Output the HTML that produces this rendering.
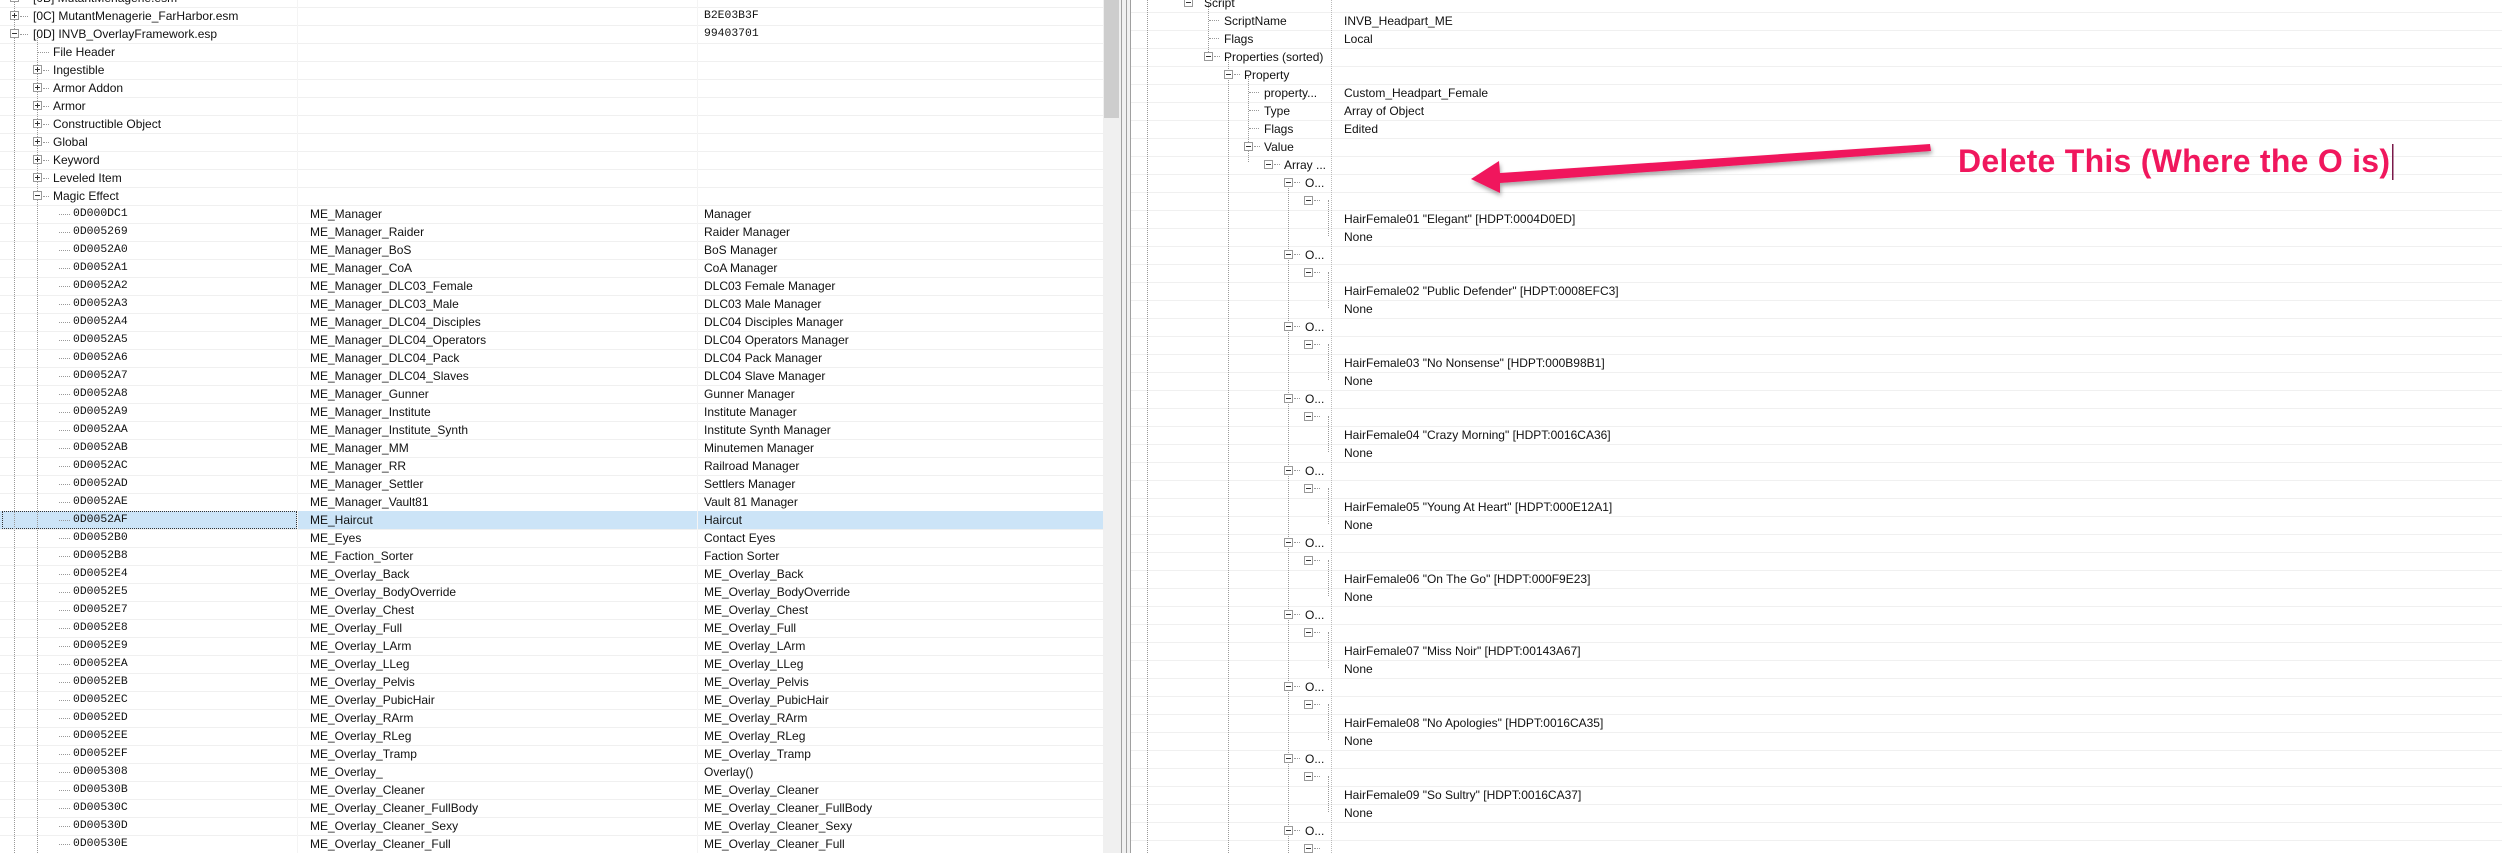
<!DOCTYPE html>
<html><head><meta charset="utf-8"><style>
*{margin:0;padding:0;box-sizing:border-box}
body{width:2502px;height:853px;overflow:hidden;background:#fff;font-family:"Liberation Sans",sans-serif;font-size:12px;color:#111;position:relative}
.p{position:absolute;top:0;height:853px;overflow:hidden}
#L{left:0;width:1103px;background-image:linear-gradient(#f0f0f0 0 1px,transparent 1px);background-size:100% 18px;background-position:0 7px}
#R{left:1131px;width:1371px;background-image:linear-gradient(#f0f0f0 0 1px,transparent 1px);background-size:100% 18px;background-position:0 12px}
.t{position:absolute;white-space:nowrap;line-height:18px;height:18px}
.m{font-family:"Liberation Mono",monospace;font-size:11.4px}
.b{position:absolute;width:9px;height:9px;border:1px solid #9a9a9a;background:#fff}
.b:before{content:"";position:absolute;left:1px;top:3px;width:5px;height:1px;background:#333}
.b.pl:after{content:"";position:absolute;left:3px;top:1px;width:1px;height:5px;background:#333}
.h{position:absolute;height:1px;border-top:1px dotted #999}
.v{position:absolute;width:1px;border-left:1px dotted #999}
.sel{position:absolute;left:0;width:1103px;height:18px;background:#cce4f7}
</style></head><body>
<div class="p" id="L">
<div class="sel" style="top:511px"></div>
<div style="position:absolute;left:2px;top:511px;width:295px;height:18px;border:1px dotted #333"></div>
<div style="position:absolute;left:297px;top:0;width:1px;height:853px;background:#f4f4f4"></div>
<div style="position:absolute;left:697px;top:0;width:1px;height:853px;background:#f4f4f4"></div>
<div class="v" style="left:14px;top:0;height:853px"></div>
<div class="v" style="left:37px;top:36px;height:817px"></div>
<div class="b pl" style="left:10px;top:-7px"></div><div class="t" style="left:33px;top:-11px">[0B] MutantMenagerie.esm</div><div class="t m" style="left:704px;top:-11px">22990891</div>
<div class="b pl" style="left:10px;top:11px"></div><div class="h" style="left:20px;top:16px;width:8px"></div><div class="t" style="left:33px;top:7px">[0C] MutantMenagerie_FarHarbor.esm</div><div class="t m" style="left:704px;top:7px">B2E03B3F</div>
<div class="b" style="left:10px;top:29px"></div><div class="h" style="left:20px;top:34px;width:8px"></div><div class="t" style="left:33px;top:25px">[0D] INVB_OverlayFramework.esp</div><div class="t m" style="left:704px;top:25px">99403701</div>
<div class="h" style="left:38px;top:52px;width:11px"></div><div class="t" style="left:53px;top:43px">File Header</div>
<div class="b pl" style="left:33px;top:65px"></div><div class="h" style="left:43px;top:70px;width:6px"></div><div class="t" style="left:53px;top:61px">Ingestible</div>
<div class="b pl" style="left:33px;top:83px"></div><div class="h" style="left:43px;top:88px;width:6px"></div><div class="t" style="left:53px;top:79px">Armor Addon</div>
<div class="b pl" style="left:33px;top:101px"></div><div class="h" style="left:43px;top:106px;width:6px"></div><div class="t" style="left:53px;top:97px">Armor</div>
<div class="b pl" style="left:33px;top:119px"></div><div class="h" style="left:43px;top:124px;width:6px"></div><div class="t" style="left:53px;top:115px">Constructible Object</div>
<div class="b pl" style="left:33px;top:137px"></div><div class="h" style="left:43px;top:142px;width:6px"></div><div class="t" style="left:53px;top:133px">Global</div>
<div class="b pl" style="left:33px;top:155px"></div><div class="h" style="left:43px;top:160px;width:6px"></div><div class="t" style="left:53px;top:151px">Keyword</div>
<div class="b pl" style="left:33px;top:173px"></div><div class="h" style="left:43px;top:178px;width:6px"></div><div class="t" style="left:53px;top:169px">Leveled Item</div>
<div class="b" style="left:33px;top:191px"></div><div class="h" style="left:43px;top:196px;width:6px"></div><div class="t" style="left:53px;top:187px">Magic Effect</div>
<div style="position:absolute;left:0;top:205px;width:1103px">
<style>
.rc{position:relative;height:18px;line-height:18px;white-space:nowrap}
.rc:before{content:"";position:absolute;left:59px;top:9px;width:11px;border-top:1px dotted #999}
.rc .i{position:absolute;left:73px;font-family:"Liberation Mono",monospace;font-size:11.4px}
.rc .n{position:absolute;left:310px}
.rc .d{position:absolute;left:704px}
</style>
<div class="rc"><span class="i">0D000DC1</span><span class="n">ME_Manager</span><span class="d">Manager</span></div>
<div class="rc"><span class="i">0D005269</span><span class="n">ME_Manager_Raider</span><span class="d">Raider Manager</span></div>
<div class="rc"><span class="i">0D0052A0</span><span class="n">ME_Manager_BoS</span><span class="d">BoS Manager</span></div>
<div class="rc"><span class="i">0D0052A1</span><span class="n">ME_Manager_CoA</span><span class="d">CoA Manager</span></div>
<div class="rc"><span class="i">0D0052A2</span><span class="n">ME_Manager_DLC03_Female</span><span class="d">DLC03 Female Manager</span></div>
<div class="rc"><span class="i">0D0052A3</span><span class="n">ME_Manager_DLC03_Male</span><span class="d">DLC03 Male Manager</span></div>
<div class="rc"><span class="i">0D0052A4</span><span class="n">ME_Manager_DLC04_Disciples</span><span class="d">DLC04 Disciples Manager</span></div>
<div class="rc"><span class="i">0D0052A5</span><span class="n">ME_Manager_DLC04_Operators</span><span class="d">DLC04 Operators Manager</span></div>
<div class="rc"><span class="i">0D0052A6</span><span class="n">ME_Manager_DLC04_Pack</span><span class="d">DLC04 Pack Manager</span></div>
<div class="rc"><span class="i">0D0052A7</span><span class="n">ME_Manager_DLC04_Slaves</span><span class="d">DLC04 Slave Manager</span></div>
<div class="rc"><span class="i">0D0052A8</span><span class="n">ME_Manager_Gunner</span><span class="d">Gunner Manager</span></div>
<div class="rc"><span class="i">0D0052A9</span><span class="n">ME_Manager_Institute</span><span class="d">Institute Manager</span></div>
<div class="rc"><span class="i">0D0052AA</span><span class="n">ME_Manager_Institute_Synth</span><span class="d">Institute Synth Manager</span></div>
<div class="rc"><span class="i">0D0052AB</span><span class="n">ME_Manager_MM</span><span class="d">Minutemen Manager</span></div>
<div class="rc"><span class="i">0D0052AC</span><span class="n">ME_Manager_RR</span><span class="d">Railroad Manager</span></div>
<div class="rc"><span class="i">0D0052AD</span><span class="n">ME_Manager_Settler</span><span class="d">Settlers Manager</span></div>
<div class="rc"><span class="i">0D0052AE</span><span class="n">ME_Manager_Vault81</span><span class="d">Vault 81 Manager</span></div>
<div class="rc"><span class="i">0D0052AF</span><span class="n">ME_Haircut</span><span class="d">Haircut</span></div>
<div class="rc"><span class="i">0D0052B0</span><span class="n">ME_Eyes</span><span class="d">Contact Eyes</span></div>
<div class="rc"><span class="i">0D0052B8</span><span class="n">ME_Faction_Sorter</span><span class="d">Faction Sorter</span></div>
<div class="rc"><span class="i">0D0052E4</span><span class="n">ME_Overlay_Back</span><span class="d">ME_Overlay_Back</span></div>
<div class="rc"><span class="i">0D0052E5</span><span class="n">ME_Overlay_BodyOverride</span><span class="d">ME_Overlay_BodyOverride</span></div>
<div class="rc"><span class="i">0D0052E7</span><span class="n">ME_Overlay_Chest</span><span class="d">ME_Overlay_Chest</span></div>
<div class="rc"><span class="i">0D0052E8</span><span class="n">ME_Overlay_Full</span><span class="d">ME_Overlay_Full</span></div>
<div class="rc"><span class="i">0D0052E9</span><span class="n">ME_Overlay_LArm</span><span class="d">ME_Overlay_LArm</span></div>
<div class="rc"><span class="i">0D0052EA</span><span class="n">ME_Overlay_LLeg</span><span class="d">ME_Overlay_LLeg</span></div>
<div class="rc"><span class="i">0D0052EB</span><span class="n">ME_Overlay_Pelvis</span><span class="d">ME_Overlay_Pelvis</span></div>
<div class="rc"><span class="i">0D0052EC</span><span class="n">ME_Overlay_PubicHair</span><span class="d">ME_Overlay_PubicHair</span></div>
<div class="rc"><span class="i">0D0052ED</span><span class="n">ME_Overlay_RArm</span><span class="d">ME_Overlay_RArm</span></div>
<div class="rc"><span class="i">0D0052EE</span><span class="n">ME_Overlay_RLeg</span><span class="d">ME_Overlay_RLeg</span></div>
<div class="rc"><span class="i">0D0052EF</span><span class="n">ME_Overlay_Tramp</span><span class="d">ME_Overlay_Tramp</span></div>
<div class="rc"><span class="i">0D005308</span><span class="n">ME_Overlay_</span><span class="d">Overlay()</span></div>
<div class="rc"><span class="i">0D00530B</span><span class="n">ME_Overlay_Cleaner</span><span class="d">ME_Overlay_Cleaner</span></div>
<div class="rc"><span class="i">0D00530C</span><span class="n">ME_Overlay_Cleaner_FullBody</span><span class="d">ME_Overlay_Cleaner_FullBody</span></div>
<div class="rc"><span class="i">0D00530D</span><span class="n">ME_Overlay_Cleaner_Sexy</span><span class="d">ME_Overlay_Cleaner_Sexy</span></div>
<div class="rc"><span class="i">0D00530E</span><span class="n">ME_Overlay_Cleaner_Full</span><span class="d">ME_Overlay_Cleaner_Full</span></div>
</div>
</div>
<div style="position:absolute;left:1103px;top:0;width:17px;height:853px;background:#f0f0f0"></div>
<div style="position:absolute;left:1104px;top:0;width:15px;height:118px;background:#cdcdcd"></div>
<div style="position:absolute;left:1120px;top:0;width:11px;height:853px;background:#f0f0f0"></div>
<div style="position:absolute;left:1121px;top:0;width:1px;height:853px;background:#a0a0a0"></div>
<div style="position:absolute;left:1126px;top:0;width:1px;height:853px;background:#a0a0a0"></div>
<div style="position:absolute;left:1130px;top:0;width:1px;height:853px;background:#a0a0a0"></div>
<div class="p" id="R">
<div class="v" style="left:200px;top:0;height:853px;border-left-color:#bbb"></div>
<div class="v" style="left:16px;top:0;height:853px"></div>
<div class="v" style="left:77px;top:4px;height:48px"></div>
<div class="v" style="left:97px;top:58px;height:795px"></div>
<div class="v" style="left:117px;top:76px;height:86px"></div>
<div class="v" style="left:157px;top:184px;height:669px"></div>
<div class="b" style="left:53px;top:-2px"></div><div class="t" style="left:73px;top:-6px">Script</div>
<div class="h" style="left:78px;top:20px;width:10px"></div><div class="t" style="left:93px;top:12px">ScriptName</div><div class="t" style="left:213px;top:12px">INVB_Headpart_ME</div>
<div class="h" style="left:78px;top:38px;width:10px"></div><div class="t" style="left:93px;top:30px">Flags</div><div class="t" style="left:213px;top:30px">Local</div>
<div class="b" style="left:73px;top:52px"></div><div class="h" style="left:83px;top:56px;width:6px"></div><div class="t" style="left:93px;top:48px">Properties (sorted)</div>
<div class="b" style="left:93px;top:70px"></div><div class="h" style="left:103px;top:74px;width:6px"></div><div class="t" style="left:113px;top:66px">Property</div>
<div class="h" style="left:118px;top:92px;width:10px"></div><div class="t" style="left:133px;top:84px">property...</div><div class="t" style="left:213px;top:84px">Custom_Headpart_Female</div>
<div class="h" style="left:118px;top:110px;width:10px"></div><div class="t" style="left:133px;top:102px">Type</div><div class="t" style="left:213px;top:102px">Array of Object</div>
<div class="h" style="left:118px;top:128px;width:10px"></div><div class="t" style="left:133px;top:120px">Flags</div><div class="t" style="left:213px;top:120px">Edited</div>
<div class="b" style="left:113px;top:142px"></div><div class="h" style="left:123px;top:146px;width:6px"></div><div class="t" style="left:133px;top:138px">Value</div>
<div class="b" style="left:133px;top:160px"></div><div class="h" style="left:143px;top:164px;width:6px"></div><div class="t" style="left:153px;top:156px">Array ...</div>
<div style="position:absolute;left:0;top:174px;width:1371px">
<style>
.it{position:relative;height:72px}
.it .b1{left:153px;top:4px}
.it .b2{left:173px;top:22px}
.it .o{left:174px;top:0}
.it .hf{left:213px;top:36px}
.it .no{left:213px;top:54px}
.it .vv{position:absolute;left:197px;top:26px;height:36px;border-left:1px dotted #999}
.it .h1{left:163px;top:8px;width:6px}
.it .h2{left:183px;top:26px;width:6px}
</style>
<div class="it"><div class="b b1"></div><div class="h h1"></div><div class="t o">O...</div><div class="b b2"></div><div class="h h2"></div><div class="vv"></div><div class="t hf">HairFemale01 "Elegant" [HDPT:0004D0ED]</div><div class="t no">None</div></div>
<div class="it"><div class="b b1"></div><div class="h h1"></div><div class="t o">O...</div><div class="b b2"></div><div class="h h2"></div><div class="vv"></div><div class="t hf">HairFemale02 "Public Defender" [HDPT:0008EFC3]</div><div class="t no">None</div></div>
<div class="it"><div class="b b1"></div><div class="h h1"></div><div class="t o">O...</div><div class="b b2"></div><div class="h h2"></div><div class="vv"></div><div class="t hf">HairFemale03 "No Nonsense" [HDPT:000B98B1]</div><div class="t no">None</div></div>
<div class="it"><div class="b b1"></div><div class="h h1"></div><div class="t o">O...</div><div class="b b2"></div><div class="h h2"></div><div class="vv"></div><div class="t hf">HairFemale04 "Crazy Morning" [HDPT:0016CA36]</div><div class="t no">None</div></div>
<div class="it"><div class="b b1"></div><div class="h h1"></div><div class="t o">O...</div><div class="b b2"></div><div class="h h2"></div><div class="vv"></div><div class="t hf">HairFemale05 "Young At Heart" [HDPT:000E12A1]</div><div class="t no">None</div></div>
<div class="it"><div class="b b1"></div><div class="h h1"></div><div class="t o">O...</div><div class="b b2"></div><div class="h h2"></div><div class="vv"></div><div class="t hf">HairFemale06 "On The Go" [HDPT:000F9E23]</div><div class="t no">None</div></div>
<div class="it"><div class="b b1"></div><div class="h h1"></div><div class="t o">O...</div><div class="b b2"></div><div class="h h2"></div><div class="vv"></div><div class="t hf">HairFemale07 "Miss Noir" [HDPT:00143A67]</div><div class="t no">None</div></div>
<div class="it"><div class="b b1"></div><div class="h h1"></div><div class="t o">O...</div><div class="b b2"></div><div class="h h2"></div><div class="vv"></div><div class="t hf">HairFemale08 "No Apologies" [HDPT:0016CA35]</div><div class="t no">None</div></div>
<div class="it"><div class="b b1"></div><div class="h h1"></div><div class="t o">O...</div><div class="b b2"></div><div class="h h2"></div><div class="vv"></div><div class="t hf">HairFemale09 "So Sultry" [HDPT:0016CA37]</div><div class="t no">None</div></div>
<div class="it"><div class="b b1"></div><div class="h h1"></div><div class="t o">O...</div><div class="b b2"></div><div class="h h2"></div></div>
</div>
</div>
<svg style="position:absolute;left:0;top:0" width="2502" height="853">
<defs><filter id="s" x="-10%" y="-50%" width="120%" height="200%"><feDropShadow dx="1" dy="3" stdDeviation="2" flood-color="#000" flood-opacity="0.35"/></filter></defs>
<polygon filter="url(#s)" fill="#f0175d" points="1930,144 1931,151 1500,183 1500,193 1471,179 1499,161 1500,173"/>
<text x="1958" y="172" font-family="Liberation Sans, sans-serif" font-weight="bold" font-size="32" fill="#f0175d" textLength="432">Delete This (Where the O is)</text>
<rect x="2392" y="144" width="1.5" height="36" fill="#7a1a4a"/>
</svg>
</body></html>
